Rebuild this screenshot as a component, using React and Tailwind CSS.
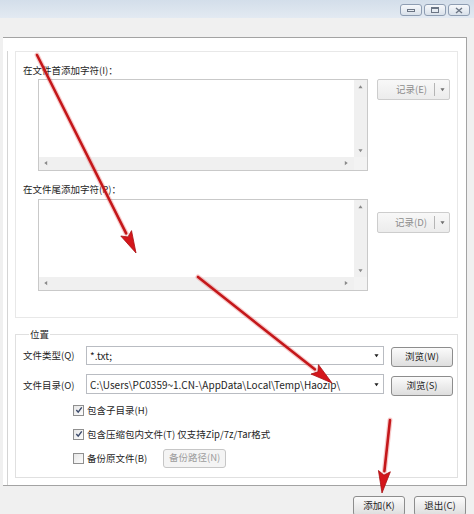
import React from "react";

const ARROWS = [
  { x1: 37, y1: 55, x2: 136, y2: 253 },
  { x1: 198, y1: 277, x2: 332, y2: 383 },
  { x1: 390, y1: 420, x2: 382, y2: 493 },
];

function head({ x1, y1, x2, y2 }, len = 22, w = 6) {
  const dx = x2 - x1;
  const dy = y2 - y1;
  const d = Math.hypot(dx, dy);
  const ux = dx / d;
  const uy = dy / d;
  const bx = x2 - ux * len;
  const by = y2 - uy * len;
  return {
    bx,
    by,
    pts: `${x2},${y2} ${bx - uy * w},${by + ux * w} ${bx + ux * 4},${by + uy * 4} ${bx + uy * w},${by - ux * w}`,
  };
}

function RedArrows() {
  return (
    <svg className="absolute inset-0 pointer-events-none" width="474" height="514">
      {ARROWS.map((a, i) => {
        const h = head(a);
        return (
          <g key={i}>
            <line x1={a.x1} y1={a.y1} x2={h.bx} y2={h.by} stroke="#e86a6a" strokeOpacity="0.35" strokeWidth="5" strokeLinecap="round" />
            <line x1={a.x1} y1={a.y1} x2={h.bx} y2={h.by} stroke="#c4171a" strokeWidth="2.6" strokeLinecap="round" />
            <polygon points={h.pts} fill="#d4161b" stroke="#a80f12" strokeWidth="0.8" />
          </g>
        );
      })}
    </svg>
  );
}

function Tri({ dir = "down", color = "#6b6b6b", size = 5 }) {
  const p = {
    up: "0,5 5,5 2.5,1.5",
    down: "0,1.5 5,1.5 2.5,5",
    left: "4.5,0 4.5,5 1,2.5",
    right: "0.5,0 0.5,5 4,2.5",
  }[dir];
  return (
    <svg width={size} height={size} viewBox="0 0 5 6">
      <polygon points={p} fill={color} />
    </svg>
  );
}

function ScrollBox() {
  return (
    <div className="w-[330px] h-[92px] border border-[#c9c9c9] bg-white flex flex-col">
      <div className="flex flex-1">
        <div className="flex-1" />
        <div className="w-[13px] bg-[#f0f0f0] flex flex-col justify-between items-center pt-[4px] pb-[4px]">
          <Tri dir="up" color="#8a8a8a" />
          <Tri dir="down" color="#8a8a8a" />
        </div>
      </div>
      <div className="h-[13px] flex">
        <div className="flex-1 bg-[#f0f0f0] flex justify-between items-center pl-[4px] pr-[5px]">
          <Tri dir="left" color="#8a8a8a" />
          <Tri dir="right" color="#8a8a8a" />
        </div>
        <div className="w-[13px] bg-[#f3f3f3]" />
      </div>
    </div>
  );
}

function SplitButton({ label, className }) {
  return (
    <div className={`w-[73px] h-[21px] flex items-center border border-[#cdcdcd] rounded-[2px] bg-gradient-to-b from-[#f8f8f8] to-[#ececec] text-[#8c8c8c] ${className}`}>
      <span className="flex-1 text-right pr-[7px] text-[9.5px]">{label}</span>
      <span className="w-px h-[13px] bg-[#b5b5b5]" />
      <span className="w-[14px] flex justify-center">
        <Tri dir="down" color="#6f6f6f" />
      </span>
    </div>
  );
}

function Combo({ value, className }) {
  return (
    <div className={`w-[298px] border border-[#b9bcc2] bg-white flex items-center pl-[3px] pr-[4px] ${className}`}>
      <span className="flex-1 text-[10px] text-[#1e1e1e] whitespace-nowrap overflow-hidden">{value}</span>
      <Tri dir="down" color="#202020" />
    </div>
  );
}

function WinButton({ label, className }) {
  return (
    <button className={`h-[20px] px-[4px] border border-[#8d8d8d] rounded-[3px] bg-gradient-to-b from-[#fbfbfb] to-[#dedede] text-[9.5px] text-[#1f1f1f] leading-none ${className}`}>
      {label}
    </button>
  );
}

function Check({ checked, label }) {
  return (
    <div className="flex items-center gap-[3px]">
      <span className="w-[11px] h-[11px] border border-[#8f8f8f] bg-gradient-to-br from-[#e6e6e6] to-[#fdfdfd] flex items-center justify-center">
        {checked && (
          <svg width="8" height="8" viewBox="0 0 9 9">
            <path d="M1.5 4.6 L3.6 7 L7.6 1.6" fill="none" stroke="#3b4a6b" strokeWidth="1.6" />
          </svg>
        )}
      </span>
      <span className="text-[9.5px] text-[#1e1e1e] whitespace-nowrap">{label}</span>
    </div>
  );
}

function TitleControl({ children }) {
  return (
    <div className="w-[22px] h-[12px] border border-[#8e9db2] rounded-[3px] bg-gradient-to-b from-[#f6f8fb] to-[#d9e1ea] flex items-center justify-center">
      {children}
    </div>
  );
}

export default function App() {
  return (
    <div className="relative w-[474px] h-[514px] overflow-hidden bg-[#f0f0f0] font-['Noto_Sans_CJK_SC','Microsoft_YaHei',sans-serif] text-[#1e1e1e]">
      {/* title bar */}
      <div className="h-[18px] bg-gradient-to-b from-[#d3deea] to-[#e3eaf2] flex justify-end items-start pt-[4px] pr-[4px] gap-[2px]">
        <TitleControl>
          <span className="w-[8px] h-[3px] border border-[#6b7584]" />
        </TitleControl>
        <TitleControl>
          <span className="w-[8px] h-[6px] border border-[#6b7584] border-t-2" />
        </TitleControl>
        <TitleControl>
          <svg width="8" height="7" viewBox="0 0 8 7">
            <path d="M1 1 L7 6 M7 1 L1 6" stroke="#6b7584" strokeWidth="1.4" />
          </svg>
        </TitleControl>
      </div>
      {/* tool band */}
      <div className="h-[19px] bg-[#f0f0f0]" />

      {/* main panel */}
      <div className="ml-[3px] w-[464px] h-[449px] bg-white border-t border-r border-b border-[#a3a3a3] pt-[13px] flex flex-col">
        <div className="ml-[4px] flex-1 border-l border-[#d4d4d4] pl-[7px] pr-[7px] pb-[7px] flex flex-col">
          {/* group 1 */}
          <div className="w-[443px] h-[267px] border border-[#e8e8e8] flex flex-col">
            <div className="ml-[7px] mt-[10px] text-[9.5px] leading-[16px]">在文件首添加字符(I)：</div>
            <div className="ml-[22px] mt-[1px] flex items-start gap-[9px]">
              <ScrollBox />
              <SplitButton label="记录(E)" />
            </div>
            <div className="ml-[7px] mt-[10px] text-[9.5px] leading-[16px]">在文件尾添加字符(P)：</div>
            <div className="ml-[22px] mt-[2px] flex items-start gap-[9px]">
              <ScrollBox />
              <SplitButton label="记录(D)" className="mt-[13px]" />
            </div>
          </div>

          {/* group 2 */}
          <fieldset className="mt-[8px] w-[443px] flex-1 border border-[#e0e0e0] pl-[7px]">
            <legend className="ml-[6px] text-[9.5px] leading-[16px] px-[1px]">位置</legend>
            <div className="mt-[4px] flex items-start">
              <span className="w-[63px] text-[9.5px] leading-[18px]">文件类型(Q)</span>
              <Combo value="*.txt;" className="h-[19px]" />
              <WinButton label="浏览(W)" className="ml-[7px] mt-[1px] w-[62px]" />
            </div>
            <div className="mt-[7px] flex items-start">
              <span className="w-[63px] text-[9.5px] leading-[19px] mt-[2px]">文件目录(O)</span>
              <Combo value="C:\Users\PC0359~1.CN-\AppData\Local\Temp\Haozip\" className="h-[20px]" />
              <WinButton label="浏览(S)" className="ml-[7px] mt-[2px] w-[62px]" />
            </div>
            <div className="ml-[50px] mt-[7px]">
              <Check checked label="包含子目录(H)" />
            </div>
            <div className="ml-[50px] mt-[10px]">
              <Check checked label="包含压缩包内文件(T) 仅支持Zip/7z/Tar格式" />
            </div>
            <div className="ml-[50px] mt-[7px] flex items-center gap-[16px]">
              <Check label="备份原文件(B)" />
              <button className="h-[19px] w-[63px] border border-[#c6c6c6] rounded-[3px] bg-[#f4f4f4] text-[9.5px] text-[#9d9d9d] leading-none">
                备份路径(N)
              </button>
            </div>
          </fieldset>
        </div>
      </div>

      {/* bottom buttons */}
      <div className="flex justify-end gap-[9px] pr-[8px] mt-[10px]">
        <WinButton label="添加(K)" className="w-[52px] h-[18px]" />
        <WinButton label="退出(C)" className="w-[52px] h-[18px]" />
      </div>

      <RedArrows />
    </div>
  );
}
